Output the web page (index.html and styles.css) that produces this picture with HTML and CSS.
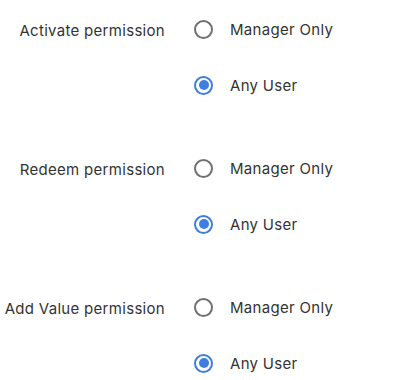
FILE: index.html
```html
<!DOCTYPE html>
<html>
<head>
<meta charset="utf-8">
<link rel="stylesheet" href="styles.css">
</head>
<body>
<div class="form">
  <div class="group">
    <div class="label">Activate permission</div>
    <div class="options">
      <div class="option"><span class="radio"></span><span class="text">Manager Only</span></div>
      <div class="option"><span class="radio checked"></span><span class="text">Any User</span></div>
    </div>
  </div>
  <div class="group">
    <div class="label">Redeem permission</div>
    <div class="options">
      <div class="option"><span class="radio"></span><span class="text">Manager Only</span></div>
      <div class="option"><span class="radio checked"></span><span class="text">Any User</span></div>
    </div>
  </div>
  <div class="group">
    <div class="label">Add Value permission</div>
    <div class="options">
      <div class="option"><span class="radio"></span><span class="text">Manager Only</span></div>
      <div class="option"><span class="radio checked"></span><span class="text">Any User</span></div>
    </div>
  </div>
</div>
</body>
</html>
```
FILE: styles.css
```css
html, body {
  margin: 0;
  padding: 0;
  background: #ffffff;
}
body {
  font-family: Inter, Roboto, "Liberation Sans", sans-serif;
  font-size: 15px;
  letter-spacing: 0.3px;
  color: #333333;
}
.form {
  display: flex;
  flex-direction: column;
  gap: 27px;
  padding-top: 1px;
}
.group {
  display: flex;
  align-items: flex-start;
}
.label {
  width: 165px;
  text-align: right;
  line-height: 60px;
}
.options {
  display: flex;
  flex-direction: column;
  padding-left: 29px;
}
.option {
  display: flex;
  align-items: center;
  height: 56px;
}
.radio {
  box-sizing: border-box;
  width: 19px;
  height: 19px;
  border: 2px solid #707070;
  border-radius: 50%;
  display: flex;
  align-items: center;
  justify-content: center;
  flex: none;
}
.radio.checked {
  border-color: #3d7fe0;
}
.radio.checked::after {
  content: "";
  width: 10px;
  height: 10px;
  border-radius: 50%;
  background: #3d7fe0;
}
.text {
  margin-left: 17px;
}
```
